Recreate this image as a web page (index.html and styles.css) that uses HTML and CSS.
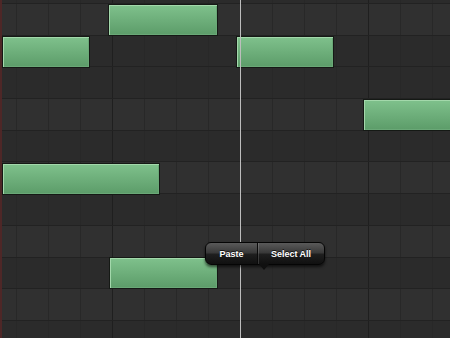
FILE: index.html
```html
<!DOCTYPE html>
<html>
<head>
<meta charset="utf-8">
<link rel="stylesheet" href="styles.css">
</head>
<body>
<div class="roll">
  <div class="rows">
    <div class="row top dark"></div>
    <div class="row light"></div>
    <div class="row dark"></div>
    <div class="row dark"></div>
    <div class="row light"></div>
    <div class="row dark"></div>
    <div class="row light"></div>
    <div class="row dark"></div>
    <div class="row light"></div>
    <div class="row dark"></div>
    <div class="row light"></div>
    <div class="row dark"></div>
  </div>
  <div class="note" style="left:108px;top:4px;width:110px"></div>
  <div class="note" style="left:2px;top:36px;width:88px"></div>
  <div class="note" style="left:236px;top:36px;width:98px"></div>
  <div class="note" style="left:363px;top:99px;width:100px"></div>
  <div class="note" style="left:2px;top:163px;width:158px"></div>
  <div class="note" style="left:109px;top:257px;width:109px"></div>
  <div class="playhead"></div>
  <div class="menu">
    <div class="item paste">Paste</div>
    <div class="item select">Select All</div>
    <div class="arrow"></div>
  </div>
</div>
</body>
</html>
```
FILE: styles.css
```css
html, body {
  margin: 0;
  padding: 0;
  background: #2c2c2c;
  overflow: hidden;
}
.roll {
  position: relative;
  width: 450px;
  height: 338px;
  overflow: hidden;
  font-family: "Liberation Sans", Arial, sans-serif;
}
.roll::before {
  content: "";
  position: absolute;
  left: 0;
  top: 0;
  width: 2px;
  height: 338px;
  background: #4e2727;
  z-index: 3;
}
.rows {
  display: flex;
  flex-direction: column;
}
.row {
  height: 30.7px;
  flex: none;
  border-bottom: 1px solid #222;
  background-image:
    repeating-linear-gradient(to right, transparent 0 112px, #1f1f1f 112px 113px, transparent 113px 128px),
    repeating-linear-gradient(to right, transparent 0 16px, #282828 16px 17px, transparent 17px 32px);
}
.row.top { height: 3px; }
.row.dark { background-color: #2b2b2b; }
.row.light { background-color: #303030; }
.note {
  position: absolute;
  height: 32px;
  box-sizing: border-box;
  border: 1px solid #151915;
  background: linear-gradient(#7fc18c, #5c9c69);
  box-shadow: inset 1px 1px 0 #a3d8ab, inset -1px -1px 0 #6aa877;
  z-index: 1;
}
.playhead {
  position: absolute;
  left: 240px;
  top: 0;
  width: 1px;
  height: 338px;
  background: #bdbdbd;
  z-index: 2;
}
.menu {
  position: absolute;
  left: 205px;
  top: 242px;
  width: 120px;
  height: 23px;
  box-sizing: border-box;
  display: flex;
  border: 1px solid #050505;
  border-radius: 6px;
  background: linear-gradient(#5a5a5a 0, #3a3a3a 45%, #1e1e1e 55%, #101010 100%);
  box-shadow: 0 2px 3px rgba(0,0,0,0.6);
  z-index: 4;
}
.item {
  display: flex;
  align-items: center;
  justify-content: center;
  color: #fff;
  font-weight: bold;
  font-size: 9px;
  text-shadow: 0 -1px 0 rgba(0,0,0,0.7);
}
.paste {
  width: 51px;
  border-right: 1px solid #0a0a0a;
  box-shadow: 1px 0 0 rgba(255,255,255,0.15);
}
.select {
  flex: 1;
}
.arrow {
  position: absolute;
  left: 53px;
  bottom: -6px;
  width: 0;
  height: 0;
  border-left: 5px solid transparent;
  border-right: 5px solid transparent;
  border-top: 6px solid #101010;
}
```
